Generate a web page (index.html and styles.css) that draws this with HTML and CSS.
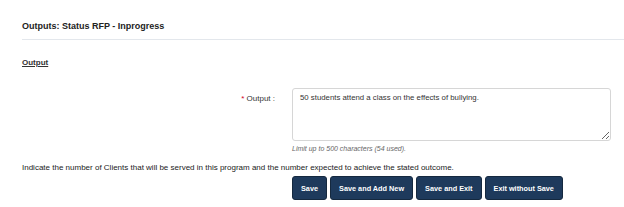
FILE: index.html
```html
<!DOCTYPE html>
<html lang="en">
<head>
    <meta charset="UTF-8">
    <title>Outputs: Status RFP - Inprogress</title>
    <link rel="stylesheet" href="styles.css">
</head>
<body>
    <div class="page">
        <h2 class="page-title">Outputs: Status RFP - Inprogress</h2>
        <div class="section">
            <h3 class="section-title">Output</h3>
            <div class="form-row">
                <label class="form-label" for="output"><span class="req">*</span> Output :</label>
                <div class="form-field">
                    <textarea id="output" class="output-box">50 students attend a class on the effects of bullying.</textarea>
                    <div class="hint">Limit up to 500 characters (54 used).</div>
                </div>
            </div>
            <p class="note">Indicate the number of Clients that will be served in this program and the number expected to achieve the stated outcome.</p>
            <div class="actions">
                <button class="btn">Save</button>
                <button class="btn">Save and Add New</button>
                <button class="btn">Save and Exit</button>
                <button class="btn">Exit without Save</button>
            </div>
        </div>
    </div>
</body>
</html>
```

FILE: styles.css
```css
body {
    margin: 0;
    background: #fff;
    font-family: "Liberation Sans", Arial, sans-serif;
    color: #333;
}

.page {
    padding: 21px 0 0 22px;
}

.page-title {
    margin: 0;
    font-size: 9px;
    font-weight: bold;
    color: #222;
    padding-bottom: 8px;
    border-bottom: 1px solid #e3e7ec;
}

.section {
    padding-top: 18px;
}

.section-title {
    margin: 0;
    font-size: 8px;
    font-weight: bold;
    text-decoration: underline;
    color: #333;
}

.form-row {
    display: flex;
    margin-top: 21px;
}

.form-label {
    width: 253px;
    text-align: right;
    font-size: 8px;
    padding-top: 6px;
    color: #333;
}

.req {
    color: #d0021b;
}

.form-field {
    margin-left: 17px;
}

.output-box {
    display: block;
    width: 319px;
    height: 53px;
    box-sizing: border-box;
    border: 1px solid #d6d6d6;
    border-radius: 3px;
    padding: 4px 7px;
    font-family: "Liberation Sans", Arial, sans-serif;
    font-size: 7.8px;
    color: #333;
    resize: vertical;
}

.hint {
    margin-top: 4px;
    font-size: 7px;
    font-style: italic;
    color: #666;
}

.note {
    margin: 11px 0 0;
    font-size: 8px;
    color: #222;
}

.actions {
    display: flex;
    gap: 3px;
    margin: 4px 0 0 270px;
}

.btn {
    height: 24px;
    padding: 0 8px;
    background: #1e3a5c;
    color: #fff;
    border: 1px solid #15293f;
    border-radius: 3px;
    font-family: "Liberation Sans", Arial, sans-serif;
    font-size: 7.3px;
    font-weight: bold;
}
```
